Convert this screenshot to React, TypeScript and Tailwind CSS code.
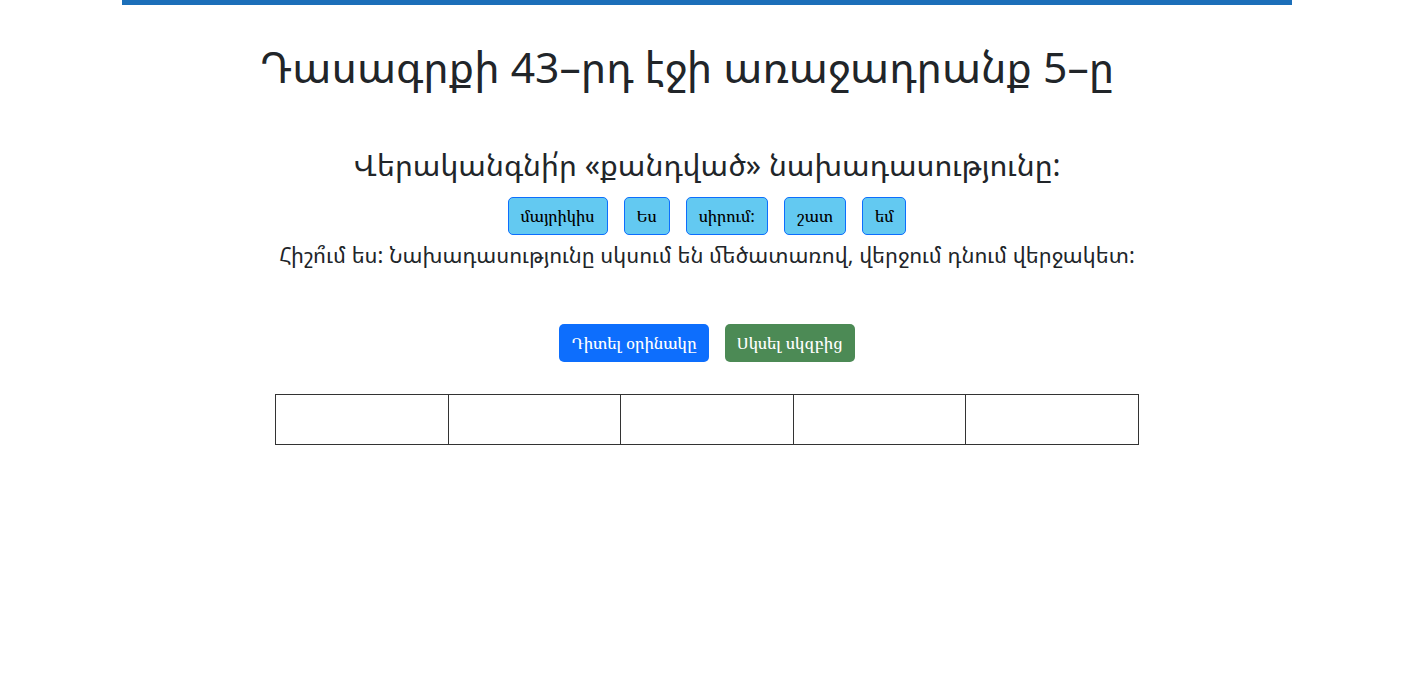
const sans = '"Noto Sans Armenian", "Noto Sans", sans-serif';
const serif = '"Noto Serif Armenian", "DejaVu Serif", serif';

export default function App() {
  const words = ["մայրիկիս", "Ես", "սիրում:", "շատ", "եմ"];
  return (
    <div className="min-h-screen bg-white" style={{ fontFamily: sans }}>
      <div className="ml-[122px] w-[1170px] border-t-[5px] border-[#1c6fb9]">
        <h1 className="mt-[36px] pr-[40px] text-center text-[42.6px] leading-[52px] text-[#212529]">
          Դասագրքի 43–րդ էջի առաջադրանք 5–ը
        </h1>
        <h3 className="mt-[54px] text-center text-[30px] leading-[36px] text-[#212529]">
          Վերականգնի՛ր «քանդված» նախադասությունը:
        </h3>
        <div className="mt-[14px] flex justify-center gap-4">
          {words.map((w) => (
            <button
              key={w}
              className="h-[38px] rounded-[5px] border border-[#0d6efd] bg-[#63c9f1] px-[12px] text-[16.3px] text-black"
              style={{ fontFamily: serif }}
            >
              {w}
            </button>
          ))}
        </div>
        <p className="mt-[7px] text-center text-[21.7px] leading-[26px] text-[#212529]">
          Հիշո՞ւմ ես: Նախադասությունը սկսում են մեծատառով, վերջում դնում վերջակետ:
        </p>
        <div className="mt-[56px] flex justify-center gap-4" style={{ fontFamily: serif }}>
          <button className="h-[38px] rounded-[5px] bg-[#0d6efd] px-[12px] text-[16.5px] text-white">
            Դիտել օրինակը
          </button>
          <button className="h-[38px] rounded-[5px] bg-[#4c8a55] px-[12px] text-[16.5px] text-white">
            Սկսել սկզբից
          </button>
        </div>
        <table className="mx-auto mt-[32px] w-[864px] border-collapse">
          <tbody>
            <tr>
              {words.map((w) => (
                <td key={w} className="h-[50px] w-1/5 border border-[#333]"></td>
              ))}
            </tr>
          </tbody>
        </table>
      </div>
    </div>
  );
}
